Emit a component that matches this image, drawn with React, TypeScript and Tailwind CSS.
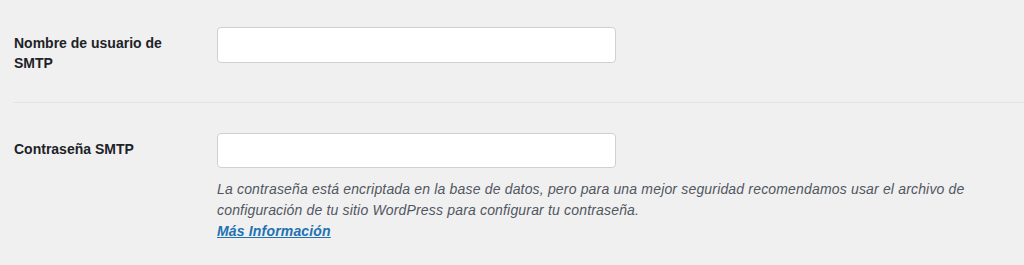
import React from "react";

export default function App() {
  return (
    <div
      className="w-[1024px] h-[265px] bg-[#f0f0f1] overflow-hidden text-[14px] text-[#1d2327]"
      style={{ fontFamily: '"Liberation Sans", Arial, sans-serif' }}
    >
      <div className="pl-[14px]">
        <div className="flex items-start pt-[27px] pb-[29px]">
          <label className="w-[203px] mt-[6px] font-bold leading-[20px] pr-[30px]">
            Nombre de usuario de SMTP
          </label>
          <div>
            <input
              type="text"
              className="block w-[399px] h-[36px] bg-white border border-[#cfd0d2] rounded-[4px] px-2 outline-none"
            />
          </div>
        </div>
      </div>
      <div className="ml-[13px] h-px bg-[#e4e4e5]" />
      <div className="pl-[14px]">
        <div className="flex items-start pt-[30px]">
          <label className="w-[203px] mt-[6px] font-bold leading-[20px]">
            Contraseña SMTP
          </label>
          <div className="flex-1 pr-[16px]">
            <input
              type="password"
              className="block w-[399px] h-[35px] bg-white border border-[#cfd0d2] rounded-[4px] px-2 outline-none"
            />
            <p className="mt-[11px] italic text-[#50575e] leading-[21px] tracking-[0.17px]">
              La contraseña está encriptada en la base de datos, pero para una mejor seguridad recomendamos usar el archivo de configuración de tu sitio WordPress para configurar tu contraseña.
              <br />
              <a href="#" className="font-bold text-[#2271b1] underline">
                Más Información
              </a>
            </p>
          </div>
        </div>
      </div>
    </div>
  );
}
